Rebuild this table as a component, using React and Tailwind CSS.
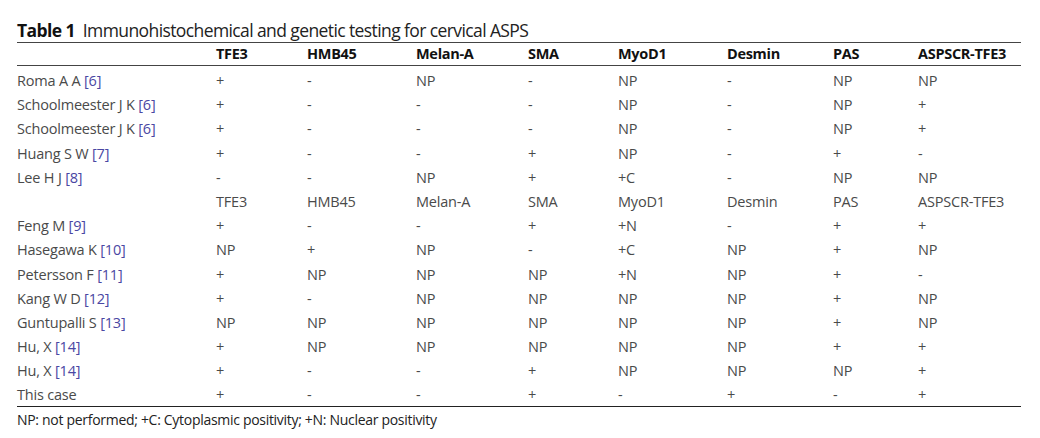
import React from 'react'

const cols = ["TFE3", "HMB45", "Melan-A", "SMA", "MyoD1", "Desmin", "PAS", "ASPSCR-TFE3"];

const rows = [
  { name: "Roma A A", ref: "6", vals: ["+", "-", "NP", "-", "NP", "-", "NP", "NP"] },
  { name: "Schoolmeester J K", ref: "6", vals: ["+", "-", "-", "-", "NP", "-", "NP", "+"] },
  { name: "Schoolmeester J K", ref: "6", vals: ["+", "-", "-", "-", "NP", "-", "NP", "+"] },
  { name: "Huang S W", ref: "7", vals: ["+", "-", "-", "+", "NP", "-", "+", "-"] },
  { name: "Lee H J", ref: "8", vals: ["-", "-", "NP", "+", "+C", "-", "NP", "NP"] },
  { name: "", ref: "", vals: cols },
  { name: "Feng M", ref: "9", vals: ["+", "-", "-", "+", "+N", "-", "+", "+"] },
  { name: "Hasegawa K", ref: "10", vals: ["NP", "+", "NP", "-", "+C", "NP", "+", "NP"] },
  { name: "Petersson F", ref: "11", vals: ["+", "NP", "NP", "NP", "+N", "NP", "+", "-"] },
  { name: "Kang W D", ref: "12", vals: ["+", "-", "NP", "NP", "NP", "NP", "+", "NP"] },
  { name: "Guntupalli S", ref: "13", vals: ["NP", "NP", "NP", "NP", "NP", "NP", "+", "NP"] },
  { name: "Hu, X", ref: "14", vals: ["+", "NP", "NP", "NP", "NP", "NP", "+", "+"] },
  { name: "Hu, X", ref: "14", vals: ["+", "-", "-", "+", "NP", "NP", "NP", "+"] },
  { name: "This case", ref: "", vals: ["+", "-", "-", "+", "-", "+", "-", "+"] },
];

const grid = "grid grid-cols-[199px_91px_109px_112px_90px_109px_106px_85px_103px] items-center";

export default function App() {
  return (
    <div className="w-[1040px] h-[438px] bg-white pl-[17px] pt-[19px] font-['Open_Sans','Noto_Sans',sans-serif]">
      <div className="w-[1004px]">
        {/* title */}
        <div className="h-[23px] flex items-center pt-[1px] text-[17.5px] leading-none tracking-[-0.6px] text-[#222]">
          <span className="font-bold text-[#111] mr-[8px]">Table 1</span>
          <span>Immunohistochemical and genetic testing for cervical ASPS</span>
        </div>

        {/* header */}
        <div className={`${grid} h-[24px] border-t-[1.5px] border-b-[1.5px] border-[#444] text-[14.5px] font-bold tracking-[-0.3px] text-[#111]`}>
          <div></div>
          {cols.map((c) => (
            <div key={c}>{c}</div>
          ))}
        </div>

        {/* body */}
        <div className="border-b-[1.5px] border-[#222] pt-[1px] text-[14.5px] tracking-[-0.2px] text-[#4a4a4a]">
          {rows.map((r, i) => (
            <div key={i} className={`${grid} h-[24.2px] pt-[3px]`}>
              <div>
                {r.name}
                {r.ref && <span className="text-[#4a47a3]"> [{r.ref}]</span>}
              </div>
              {r.vals.map((v, j) => (
                <div key={j}>{v}</div>
              ))}
            </div>
          ))}
        </div>

        {/* footnote */}
        <div className="mt-[2px] text-[14px] tracking-[-0.3px] text-[#222]">
          NP: not performed; +C: Cytoplasmic positivity; +N: Nuclear positivity
        </div>
      </div>
    </div>
  )
}
